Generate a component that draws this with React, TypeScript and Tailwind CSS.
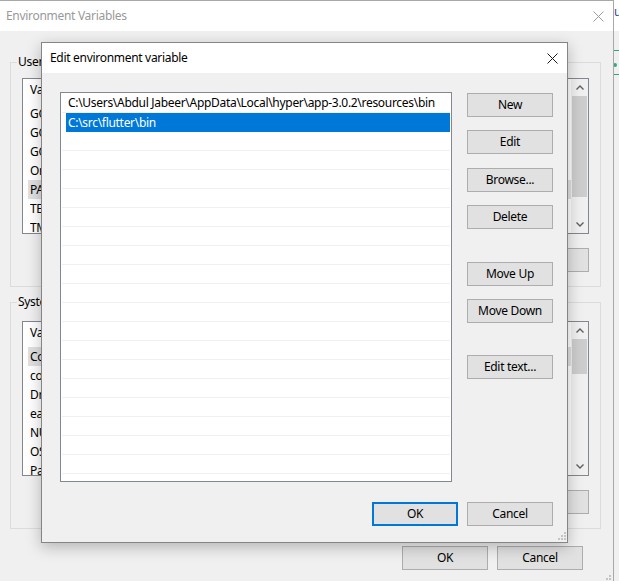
import React from "react";

const FONT = "font-['Noto_Sans',sans-serif] tracking-[-0.3px]";

function CloseX({ color }: { color: string }) {
  return (
    <svg width="11" height="11" viewBox="0 0 11 11">
      <path d="M0.5 0.5L10.5 10.5M10.5 0.5L0.5 10.5" stroke={color} strokeWidth="1" fill="none" />
    </svg>
  );
}

function Grip() {
  const pts = [
    [8, 2],
    [5, 5],
    [8, 5],
    [2, 8],
    [5, 8],
    [8, 8],
  ];
  return (
    <svg width="10" height="10" viewBox="0 0 10 10">
      {pts.map(([x, y], i) => (
        <rect key={i} x={x} y={y} width="2" height="2" fill="#c4c4c4" />
      ))}
    </svg>
  );
}

function Chevron({ up }: { up: boolean }) {
  return (
    <svg width="8" height="5" viewBox="0 0 8 5">
      <path
        d={up ? "M0.5 4.5L4 1L7.5 4.5" : "M0.5 0.5L4 4L7.5 0.5"}
        stroke="#606060"
        strokeWidth="1.4"
        fill="none"
      />
    </svg>
  );
}

function WinButton({ label, className = "" }: { label: string; className?: string }) {
  return (
    <button
      className={`h-[24px] w-[86px] shrink-0 border border-[#adadad] bg-[#e1e1e1] text-[12px] leading-none text-black ${className}`}
    >
      {label}
    </button>
  );
}

function BgList({
  rows,
  selectedIndex,
  heightClass,
  thumbClass,
}: {
  rows: [string, string][];
  selectedIndex: number;
  heightClass: string;
  thumbClass: string;
}) {
  return (
    <div className={`mx-[11px] flex min-w-0 border border-[#828790] bg-white ${heightClass}`}>
      <div className="min-w-0 flex-1 overflow-hidden">
        <div className="flex h-[22px] items-center text-[12px] text-black">
          <div className="w-[170px] shrink-0 pl-[7px]">Variable</div>
          <div className="pl-[6px]">Value</div>
        </div>
        <div className="pt-[3px]">
          {rows.map(([k, v], i) => (
            <div key={i} className="flex h-[19px] items-center text-[12px] text-black">
              <div
                className={`ml-[5px] flex h-[19px] min-w-0 flex-1 items-center overflow-hidden whitespace-nowrap pl-[2px] ${
                  i === selectedIndex ? "bg-[#e0e0e0]" : ""
                }`}
              >
                <span className="w-[163px] shrink-0 overflow-hidden">{k}</span>
                <span className="pl-[6px]">{v}</span>
              </div>
            </div>
          ))}
        </div>
      </div>
      <div className="flex w-[17px] shrink-0 flex-col bg-[#f0f0f0]">
        <div className="flex h-[17px] items-center justify-center">
          <Chevron up />
        </div>
        <div className="flex-1 px-[1px]">
          <div className={`bg-[#cdcdcd] ${thumbClass}`} />
        </div>
        <div className="flex h-[17px] items-center justify-center">
          <Chevron up={false} />
        </div>
      </div>
    </div>
  );
}

function GroupBox({
  title,
  children,
  className = "",
}: {
  title: string;
  children: React.ReactNode;
  className?: string;
}) {
  return (
    <fieldset className={`ml-[10px] mr-[12px] min-w-0 border border-[#dcdcdc] p-0 ${className}`}>
      <legend className="ml-[6px] h-[16px] px-[1px] text-[12px] leading-[16px] text-black">{title}</legend>
      {children}
    </fieldset>
  );
}

const userRows: [string, string][] = [
  ["GOBIN", "C:\\Users\\Abdul Jabeer\\go\\bin"],
  ["GOPATH", "C:\\Users\\Abdul Jabeer\\go"],
  ["GOROOT", "C:\\Go"],
  ["OneDrive", "C:\\Users\\Abdul Jabeer\\OneDrive"],
  ["PATH", "C:\\Users\\Abdul Jabeer\\AppData\\Local\\hyper\\app-3.0.2\\resources\\bin"],
  ["TEMP", "C:\\Users\\Abdul Jabeer\\AppData\\Local\\Temp"],
  ["TMP", "C:\\Users\\Abdul Jabeer\\AppData\\Local\\Temp"],
];

const systemRows: [string, string][] = [
  ["ComSpec", "C:\\WINDOWS\\system32\\cmd.exe"],
  ["configsetroot", "C:\\WINDOWS\\ConfigSetRoot"],
  ["DriverData", "C:\\Windows\\System32\\Drivers\\DriverData"],
  ["easyplussdk", "C:\\Program Files (x86)\\Common Files\\lenovo"],
  ["NUMBER_OF_PROCESSORS", "4"],
  ["OS", "Windows_NT"],
  ["Path", "C:\\WINDOWS\\system32;C:\\WINDOWS"],
];

export default function App() {
  const listRows = Array.from({ length: 21 }, (_, i) => i);
  const entries = [
    "C:\\Users\\Abdul Jabeer\\AppData\\Local\\hyper\\app-3.0.2\\resources\\bin",
    "C:\\src\\flutter\\bin",
  ];

  return (
    <div className={`relative h-[581px] w-[619px] overflow-hidden bg-[#f0f0f0] ${FONT}`}>
      {/* window behind, on the far right */}
      <div className="absolute left-[600px] top-0 flex h-[581px] w-[40px] flex-col bg-[#f0f0f0]">
        <div className="h-[31px] bg-white pl-[14px] pt-[3px] text-[12px] text-[#2b4b8c]">u</div>
        <div className="mt-[19px] h-[1px] bg-[#2aa876]" />
        <div className="ml-[13px] mt-[12px] h-[4px] w-[4px] rounded-full bg-[#3aa87a]" />
        <div className="mt-[7px] h-[1px] bg-[#2aa876]" />
      </div>

      {/* Environment Variables window (inactive) */}
      <div className="absolute left-[-1px] top-0 flex h-[600px] w-[615px] flex-col border border-[#a8a8a8] bg-[#f0f0f0]">
        <div className="flex h-[30px] shrink-0 items-center justify-between bg-white pl-[6px] pr-[9px]">
          <span className="text-[12px] text-[#999999]">Environment Variables</span>
          <CloseX color="#9a9a9a" />
        </div>

        <GroupBox title="User variables for Abdul Jabeer" className="mt-[23px]">
          <div className="mt-[8px]">
            <BgList rows={userRows} selectedIndex={4} heightClass="h-[156px]" thumbClass="h-[101px]" />
          </div>
          <div className="mx-[11px] mb-[14px] mt-[14px] flex justify-end gap-[8px]">
            <WinButton label="New..." className="w-[75px]" />
            <WinButton label="Edit..." className="w-[75px]" />
            <WinButton label="Delete" className="w-[75px]" />
          </div>
        </GroupBox>

        <GroupBox title="System variables" className="mt-[7px]">
          <div className="mt-[11px]">
            <BgList rows={systemRows} selectedIndex={0} heightClass="h-[155px]" thumbClass="h-[35px]" />
          </div>
          <div className="mx-[11px] mb-[14px] mt-[14px] flex justify-end gap-[8px]">
            <WinButton label="New..." className="w-[75px]" />
            <WinButton label="Edit..." className="w-[75px]" />
            <WinButton label="Delete" className="w-[75px]" />
          </div>
        </GroupBox>

        <div className="mt-[17px] flex justify-end gap-[9px] pr-[30px]">
          <WinButton label="OK" />
          <WinButton label="Cancel" />
        </div>
        <div className="mr-[2px] mt-[3px] flex justify-end">
          <Grip />
        </div>
      </div>

      {/* Edit environment variable dialog */}
      <div className="absolute left-[41px] top-[42px] flex h-[501px] w-[527px] flex-col border border-[#858585] bg-[#f0f0f0] shadow-[0_4px_14px_rgba(0,0,0,0.25)]">
        <div className="flex h-[30px] shrink-0 items-center justify-between bg-white pl-[8px] pr-[9px]">
          <span className="text-[12px] text-black">Edit environment variable</span>
          <CloseX color="#1a1a1a" />
        </div>

        <div className="flex flex-1 flex-col pl-[18px] pr-[14px]">
          <div className="mt-[19px] flex">
            <div className="h-[390px] w-[392px] shrink-0 overflow-hidden border border-[#828790] bg-white pt-[1px]">
              {listRows.map((i) => {
                const text = entries[i];
                const selected = i === 1;
                return (
                  <div
                    key={i}
                    className={`mx-[1px] flex h-[19px] ${selected ? "" : "border-b border-[#f0f0f0]"}`}
                  >
                    <div
                      className={`ml-[4px] flex flex-1 items-center whitespace-nowrap pl-[2px] text-[12px] ${
                        selected ? "bg-[#0078d7] text-white" : "text-black"
                      }`}
                    >
                      {text ?? ""}
                    </div>
                  </div>
                );
              })}
            </div>

            <div className="ml-[15px] flex flex-col">
              <WinButton label="New" className="mt-[1px]" />
              <WinButton label="Edit" className="mt-[13px]" />
              <WinButton label="Browse..." className="mt-[14px]" />
              <WinButton label="Delete" className="mt-[13px]" />
              <WinButton label="Move Up" className="mt-[33px]" />
              <WinButton label="Move Down" className="mt-[13px]" />
              <WinButton label="Edit text..." className="mt-[32px]" />
            </div>
          </div>

          <div className="mt-[20px] flex justify-end gap-[9px]">
            <button className="h-[24px] w-[86px] border-2 border-[#0078d7] bg-[#e1e1e1] text-[12px] leading-none text-black">
              OK
            </button>
            <WinButton label="Cancel" />
          </div>
          <div className="-mr-[13px] mt-[4px] flex justify-end">
            <Grip />
          </div>
        </div>
      </div>
    </div>
  );
}
